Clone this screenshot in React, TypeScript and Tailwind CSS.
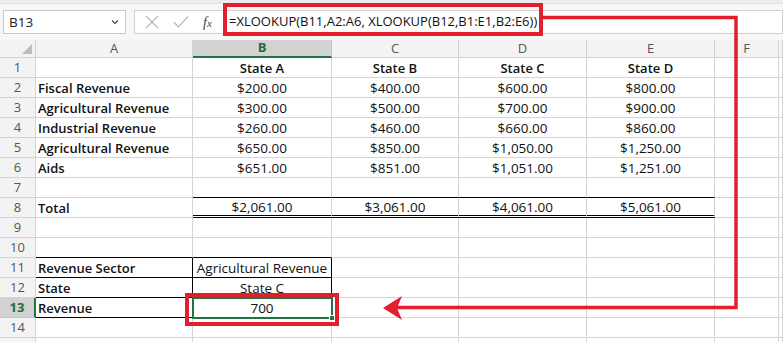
import React from 'react';

const cols = ['A', 'B', 'C', 'D', 'E', 'F', ''];

type Cell = { v?: string; bold?: boolean; center?: boolean; cls?: string };

const rows: Cell[][] = [
  [{}, { v: 'State A', bold: true, center: true }, { v: 'State B', bold: true, center: true }, { v: 'State C', bold: true, center: true }, { v: 'State D', bold: true, center: true }],
  [{ v: 'Fiscal Revenue', bold: true }, { v: '$200.00', center: true }, { v: '$400.00', center: true }, { v: '$600.00', center: true }, { v: '$800.00', center: true }],
  [{ v: 'Agricultural Revenue', bold: true }, { v: '$300.00', center: true }, { v: '$500.00', center: true }, { v: '$700.00', center: true }, { v: '$900.00', center: true }],
  [{ v: 'Industrial Revenue', bold: true }, { v: '$260.00', center: true }, { v: '$460.00', center: true }, { v: '$660.00', center: true }, { v: '$860.00', center: true }],
  [{ v: 'Agricultural Revenue', bold: true }, { v: '$650.00', center: true }, { v: '$850.00', center: true }, { v: '$1,050.00', center: true }, { v: '$1,250.00', center: true }],
  [{ v: 'Aids', bold: true }, { v: '$651.00', center: true }, { v: '$851.00', center: true }, { v: '$1,051.00', center: true }, { v: '$1,251.00', center: true }],
  [{}, { cls: 'border-b-black' }, { cls: 'border-b-black' }, { cls: 'border-b-black' }, { cls: 'border-b-black' }],
  [{ v: 'Total', bold: true }, { v: '$2,061.00', center: true, cls: 'border-b-[3px] border-b-black border-double' }, { v: '$3,061.00', center: true, cls: 'border-b-[3px] border-b-black border-double' }, { v: '$4,061.00', center: true, cls: 'border-b-[3px] border-b-black border-double' }, { v: '$5,061.00', center: true, cls: 'border-b-[3px] border-b-black border-double' }],
  [],
  [{ cls: 'border-b-black' }, { cls: 'border-b-black' }],
  [{ v: 'Revenue Sector', bold: true, cls: 'border-b-black border-r-black' }, { v: 'Agricultural Revenue', center: true, cls: 'border-b-black border-r-black' }],
  [{ v: 'State', bold: true, cls: 'border-b-black border-r-black' }, { v: 'State C', center: true, cls: 'border-b-black border-r-black' }],
  [{ v: 'Revenue', bold: true, cls: 'border-b-black border-r-black' }, { v: '700', center: true, cls: 'border-b-black border-r-black' }],
  [],
  [],
];

export default function App() {
  return (
    <div className="relative w-[783px] h-[342px] overflow-hidden bg-white text-[#111] font-['Open_Sans',sans-serif]">
      {/* formula bar */}
      <div className="h-[4px] bg-[#ececec] border-b border-[#e2e2e2]" />
      <div className="h-[36px] bg-[#f7f7f7] flex items-center pl-[3px] gap-[8px]">
        <div className="w-[123px] h-[24px] bg-white border border-[#c8c8c8] flex items-center justify-between pl-[5px] pr-[6px]">
          <span className="text-[13.5px] text-[#222]">B13</span>
          <svg width="8" height="6" viewBox="0 0 8 6"><path d="M1 1.5 L4 4.5 L7 1.5" fill="none" stroke="#444" strokeWidth="1.2" /></svg>
        </div>
        <div className="flex-1 h-[24px] bg-white border border-[#d0d0d0] flex items-center">
          <div className="w-[86px] flex items-center gap-[14px] pl-[10px]">
            <svg width="14" height="14" viewBox="0 0 14 14"><path d="M1 1 L13 13 M13 1 L1 13" stroke="#b5b5b5" strokeWidth="1.2" /></svg>
            <svg width="16" height="14" viewBox="0 0 16 14"><path d="M1 7.5 L5.5 12 L15 1.5" fill="none" stroke="#b5b5b5" strokeWidth="1.2" /></svg>
            <span className="font-['Liberation_Serif',serif] italic text-[14px] text-[#444]">f<span className="text-[11px]">x</span></span>
          </div>
          <span className="ml-[8px] text-[13px] text-[#111]">=XLOOKUP(B11,A2:A6, XLOOKUP(B12,B1:E1,B2:E6))</span>
        </div>
      </div>

      {/* sheet */}
      <div className="grid grid-cols-[36px_157px_139px_127px_128px_128px_64px_1fr] text-[13.5px]">
        {/* header row */}
        <div className="h-[18px] bg-[#f3f3f3] border-r border-b border-[#d4d4d4] relative">
          <svg className="absolute right-[3px] bottom-[3px]" width="10" height="10" viewBox="0 0 10 10"><path d="M10 0 L10 10 L0 10 Z" fill="#bdbdbd" /></svg>
        </div>
        {cols.map((c, k) => (
          <div
            key={k}
            className={
              c === 'B'
                ? 'h-[18px] bg-[#d2d2d2] border-r border-[#c4c4c4] border-b-2 border-b-[#217346] flex items-center justify-center text-[13px] font-bold text-[#1e6b3e]'
                : 'h-[18px] bg-[#f3f3f3] border-r border-b border-[#d4d4d4] flex items-center justify-center text-[13px] text-[#555]'
            }
          >
            {c}
          </div>
        ))}
        {rows.map((r, i) => {
          const n = i + 1;
          const sel = n === 13;
          return (
            <React.Fragment key={n}>
              <div
                className={
                  sel
                    ? 'h-[20px] bg-[#d2d2d2] border-b border-[#c4c4c4] border-r-2 border-r-[#217346] flex items-center justify-center text-[13px] font-bold text-[#1e6b3e]'
                    : 'h-[20px] bg-[#f3f3f3] border-r border-b border-[#d4d4d4] flex items-center justify-center text-[13px] text-[#555]'
                }
              >
                {n < 15 ? n : ''}
              </div>
              {cols.map((c, j) => {
                const cell = r[j] || {};
                return (
                  <div
                    key={j}
                    className={`h-[20px] border-r border-b border-[#d4d4d4] flex items-center pt-[2px] whitespace-nowrap ${
                      cell.center ? 'justify-center' : 'pl-[2px]'
                    } ${cell.bold ? 'font-semibold text-[13px]' : ''} ${cell.cls || ''}`}
                  >
                    {cell.v}
                  </div>
                );
              })}
            </React.Fragment>
          );
        })}
      </div>

      {/* active cell B13 */}
      <div className="absolute left-[192px] top-[297px] w-[141px] h-[22px] border-2 border-[#217346]">
        <div className="absolute right-[-4px] bottom-[-4px] w-[6px] h-[6px] bg-[#217346] border border-white" />
      </div>

      {/* annotation */}
      <svg className="absolute inset-0 pointer-events-none" width="783" height="342" viewBox="0 0 783 342">
        <rect x="225" y="5" width="316" height="29" fill="none" stroke="#e21f2c" strokeWidth="4" />
        <rect x="187" y="295" width="150" height="29" fill="none" stroke="#e21f2c" strokeWidth="4" />
        <path d="M543 17.5 H736 V307.5 H396" fill="none" stroke="#e21f2c" strokeWidth="3.5" />
        <polygon points="383,308 402,296 397,308 402,320" fill="#e21f2c" />
      </svg>
    </div>
  );
}
